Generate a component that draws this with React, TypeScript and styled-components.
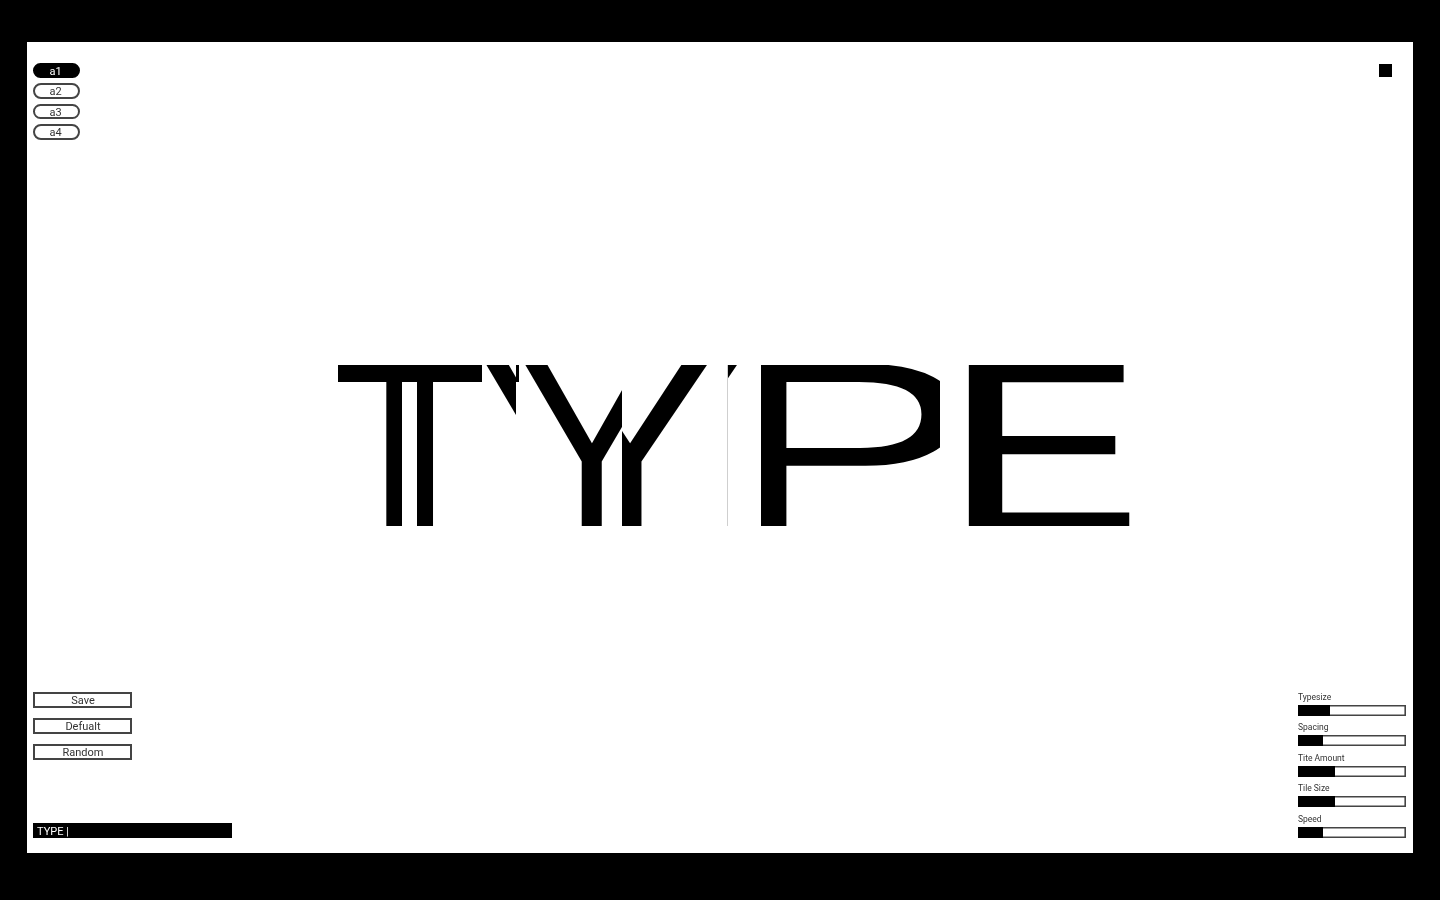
import React from 'react';
import styled, { createGlobalStyle } from 'styled-components';

const Global = createGlobalStyle`
  html, body { margin: 0; padding: 0; background: #000; }
  body { font-family: Roboto, "Liberation Sans", sans-serif; }
`;

const Frame = styled.div`
  width: 1440px; height: 900px; box-sizing: border-box;
  padding: 42px 27px 47px; background: #000;
`;
const Canvas = styled.main`
  height: 100%; box-sizing: border-box; background: #fff;
  padding: 21px 7px 15px 6px;
  display: flex; flex-direction: column; justify-content: space-between;
  filter: blur(0.6px);
`;
const Row = styled.div`
  display: flex; justify-content: space-between; align-items: flex-start;
`;
const Pills = styled.div`
  display: flex; flex-direction: column; gap: 5.3px; width: 47px;
`;
const Pill = styled.button<{ $on?: boolean }>`
  height: 15.2px; padding: 1px 2px 0 0; box-sizing: border-box; border-radius: 8px;
  border: 2px solid ${p => (p.$on ? '#000' : '#444')}; background: ${p => (p.$on ? '#000' : '#fff')};
  color: ${p => (p.$on ? '#fff' : '#333')};
  font: 11px/11px Roboto, sans-serif; text-align: center;
`;
const Square = styled.div`
  width: 13px; height: 13px; margin: 1px 14px 0 0; background: #000;
`;
const Stage = styled.div`
  display: flex; height: 161px; padding-left: 305px; margin-top: 60px;
`;
const Tile = styled.div<{ $w: number; $line?: boolean }>`
  position: relative; flex: none; width: ${p => p.$w}px; height: 161px; overflow: hidden;
  ${p => (p.$line ? 'border-left: 1px solid #cfcfcf; box-sizing: border-box;' : '')}
`;
const Glyph = styled.span<{ $x: number; $s: number }>`
  position: absolute; left: 0; top: -40.5px;
  font: 243px/243px "Liberation Sans", sans-serif; color: #000; white-space: nowrap;
  transform-origin: 0 0;
  transform: translateX(${p => p.$x}px) scaleX(${p => p.$s});
`;
const LeftCol = styled.div`
  display: flex; flex-direction: column; height: 146px; width: 199px;
`;
const Buttons = styled.div`
  display: flex; flex-direction: column; gap: 10px; width: 99px;
`;
const Btn = styled.button`
  height: 16px; box-sizing: border-box; padding: 0 0 0 1px; background: #fff;
  border: 2px solid #444; color: #333; font: 11px/13px Roboto, sans-serif; text-align: center;
`;
const TypeField = styled.div`
  margin-top: auto; height: 15px; background: #000; color: #fff;
  padding-left: 4px; font: 11px/17px Roboto, sans-serif;
`;
const Sliders = styled.div`
  display: flex; flex-direction: column; gap: 6.5px; width: 108px; height: 146px;
`;
const SliderBlock = styled.div`
  display: flex; flex-direction: column; height: 24px;
`;
const SliderLabel = styled.div`
  height: 13px; font: 8.5px/10px Roboto, sans-serif; color: #333;
`;
const Track = styled.div`
  height: 11px; background: #fff; box-shadow: inset 0 0 0 1.6px #444;
`;
const Fill = styled.div<{ $w: number }>`
  width: ${p => p.$w}px; height: 100%; background: #000;
`;

const fs = 243;
const lsb: Record<string, number> = { T: 47 / 2048, Y: 7 / 2048, P: 158 / 2048, E: 162 / 2048 };
type T = { l?: string; x0: number; x1: number; at?: number; s?: number; line?: boolean };
// x0,x1: page columns of the tile; at: page x of the glyph's ink left edge; s: horizontal stretch
const tiles: T[] = [
  { l: 'T', x0: 338, x1: 402, at: 331, s: 0.963 },
  { l: 'T', x0: 402, x1: 417, at: 395, s: 0.963 },
  { l: 'T', x0: 417, x1: 482, at: 356, s: 0.963 },
  { x0: 482, x1: 484 },
  { l: 'Y', x0: 484, x1: 516, at: 481.4, s: 0.9 },
  { l: 'T', x0: 516, x1: 519, at: 510, s: 0.963 },
  { l: 'Y', x0: 519, x1: 622, at: 520.5, s: 0.89 },
  { l: 'Y', x0: 622, x1: 727, at: 547.3, s: 1.03 },
  { l: 'Y', x0: 727, x1: 761, at: 577.3, s: 1.03, line: true },
  { l: 'P', x0: 761, x1: 940, at: 748, s: 1.61 },
  { x0: 940, x1: 968 },
  { l: 'E', x0: 968, x1: 985, at: 968, s: 1.165 },
  { l: 'E', x0: 985, x1: 1135, at: 975, s: 1.165 },
];

const pills = ['a1', 'a2', 'a3', 'a4'];
const sliders: [string, number][] = [
  ['Typesize', 32], ['Spacing', 25], ['Tite Amount', 37], ['Tile Size', 37], ['Speed', 25],
];

export default function App() {
  return (
    <Frame>
      <Global />
      <Canvas>
        <Row>
          <Pills>
            {pills.map((p, i) => <Pill key={p} $on={i === 0}>{p}</Pill>)}
          </Pills>
          <Square />
        </Row>
        <Stage>
          {tiles.map((t, i) => (
            <Tile key={i} $w={t.x1 - t.x0} $line={t.line}>
              {t.l && (
                <Glyph $x={(t.at ?? 0) - t.x0 - lsb[t.l] * fs * (t.s ?? 1) - (t.line ? 1 : 0)} $s={t.s ?? 1}>{t.l}</Glyph>
              )}
            </Tile>
          ))}
        </Stage>
        <Row>
          <LeftCol>
            <Buttons>
              <Btn>Save</Btn>
              <Btn>Defualt</Btn>
              <Btn>Random</Btn>
            </Buttons>
            <TypeField>TYPE |</TypeField>
          </LeftCol>
          <Sliders>
            {sliders.map(([n, w]) => (
              <SliderBlock key={n}>
                <SliderLabel>{n}</SliderLabel>
                <Track><Fill $w={w} /></Track>
              </SliderBlock>
            ))}
          </Sliders>
        </Row>
      </Canvas>
    </Frame>
  );
}
